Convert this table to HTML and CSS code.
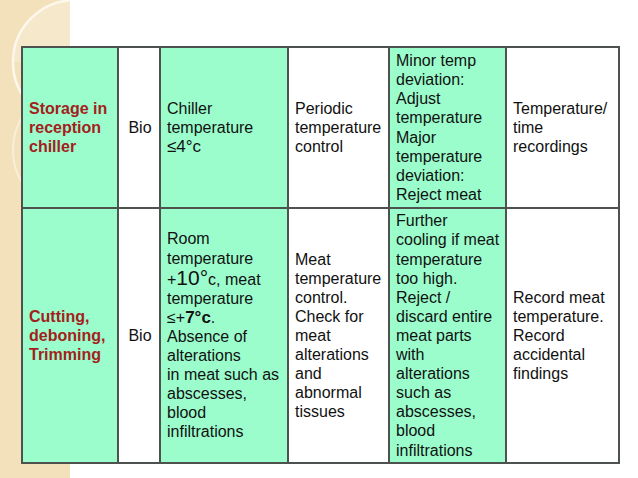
FILE: index.html
```html
<!DOCTYPE html>
<html>
<head>
<meta charset="utf-8">
<link rel="stylesheet" href="styles.css">
</head>
<body>
<svg class="deco" width="70" height="478" viewBox="0 0 70 478">
  <rect x="0" y="0" width="70" height="478" fill="#f3e1bc"/>
  <path d="M70 0 L70 62 L13 62 A62 62 0 0 1 70 0 Z" fill="#f6e8cb"/>
  <circle cx="75" cy="62" r="62" fill="none" stroke="#fdf8ec" stroke-width="2.5"/>
  <circle cx="75" cy="150" r="62" fill="none" stroke="#f9eed8" stroke-width="2"/>
</svg>
<main class="page">
  <table class="haccp">
    <colgroup>
      <col class="c1"><col class="c2"><col class="c3"><col class="c4"><col class="c5"><col class="c6">
    </colgroup>
    <tr class="row1">
      <td class="green step">Storage in<br>reception<br>chiller</td>
      <td class="hazard">Bio</td>
      <td class="green">Chiller<br>temperature<br><span class="mid">≤4°c</span></td>
      <td>Periodic<br>temperature<br>control</td>
      <td class="green">Minor temp<br>deviation:<br>Adjust<br>temperature<br>Major<br>temperature<br>deviation:<br>Reject meat</td>
      <td>Temperature/<br>time<br>recordings</td>
    </tr>
    <tr class="row2">
      <td class="green step">Cutting,<br>deboning,<br>Trimming</td>
      <td class="hazard">Bio</td>
      <td class="green">Room<br>temperature<br>+<span class="big">10°</span>c, meat<br>temperature<br>≤+<b class="mid">7°c</b>.<br>Absence of<br>alterations<br>in meat such as<br>abscesses,<br>blood<br>infiltrations</td>
      <td>Meat<br>temperature<br>control.<br>Check for<br>meat<br>alterations<br>and<br>abnormal<br>tissues</td>
      <td class="green">Further<br>cooling if meat<br>temperature<br>too high.<br>Reject /<br>discard entire<br>meat parts<br>with<br>alterations<br>such as<br>abscesses,<br>blood<br>infiltrations</td>
      <td>Record meat<br>temperature.<br>Record<br>accidental<br>findings</td>
    </tr>
  </table>
</main>
</body>
</html>
```

FILE: styles.css
```css
html, body {
  margin: 0;
  padding: 0;
  background: #fff;
}
body {
  width: 638px;
  height: 478px;
  overflow: hidden;
  position: relative;
  font-family: "Liberation Sans", Arial, sans-serif;
}
.deco {
  position: absolute;
  left: 0;
  top: 0;
  z-index: 0;
}
.page {
  position: relative;
  z-index: 1;
  padding: 46px 0 0 21px;
}
.haccp {
  border-collapse: collapse;
  table-layout: fixed;
  width: 597px;
  background: #fff;
  color: #111;
  font-size: 16px;
  line-height: 19.1px;
}
.c1 { width: 96px; }
.c2 { width: 42px; }
.c3 { width: 128px; }
.c4 { width: 101px; }
.c5 { width: 117px; }
.c6 { width: 113px; }
.haccp td {
  border: 2px solid #4d524f;
  padding: 2px 2px 2px 6px;
  vertical-align: middle;
  white-space: nowrap;
  overflow: hidden;
}
.row1 { height: 161px; }
.row2 { height: 255px; }
.green { background: #9bfdcc; }
.step {
  color: #a3211d;
  font-weight: bold;
}
.haccp td.hazard {
  text-align: center;
  padding-left: 4px;
}
.mid { font-size: 17px; }
.big { font-size: 21px; }
```
